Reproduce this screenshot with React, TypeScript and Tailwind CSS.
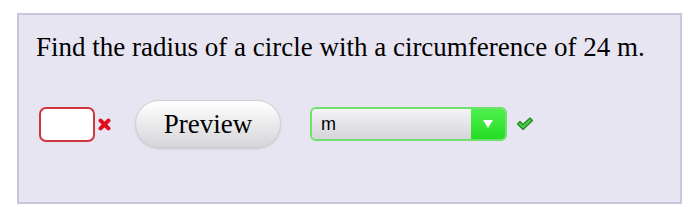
export default function App() {
  return (
    <div className="w-[700px] h-[207px] bg-white pt-[13px] pl-[17px]">
      <div
        className="w-[665px] h-[191px] border-2 border-[#c9c5dd] bg-[#e8e5f2] pl-[17px] pt-[14px]"
        style={{ fontFamily: '"Liberation Serif", serif' }}
      >
        <p className="text-[27px] leading-[36px] text-black">
          Find the radius of a circle with a circumference of 24 m.
        </p>

        <div className="mt-[35px] flex items-center">
          {/* answer box */}
          <div className="ml-[3px] h-[35px] w-[56px] rounded-[7px] border-2 border-[#d0343c] bg-white" />
          <svg className="ml-[3px] h-[13px] w-[13px]" viewBox="0 0 10 10" aria-hidden>
            <path d="M2 2 L8 8 M8 2 L2 8" stroke="#e00d1c" strokeWidth={3.2} strokeLinecap="round" />
          </svg>

          {/* preview */}
          <button className="ml-[24px] h-[48px] w-[146px] rounded-full border border-[#cfcfd4] bg-gradient-to-b from-white to-[#d6d6da] text-[27px] text-black shadow-[0_1px_2px_rgba(0,0,0,0.15)]">
            Preview
          </button>

          {/* unit select */}
          <div className="ml-[29px] flex h-[34px] w-[197px] overflow-hidden rounded-[6px] border-2 border-[#6ee06e]">
            <div
              className="flex flex-1 items-center bg-gradient-to-b from-[#f4f4f6] to-[#d5d4d9] pl-[9px] text-[18px] text-black"
              style={{ fontFamily: '"Liberation Sans", Arial, sans-serif' }}
            >
              m
            </div>
            <div className="flex w-[34px] items-center justify-center bg-gradient-to-b from-[#4df04d] to-[#22dd22]">
              <svg className="h-[10px] w-[12px]" viewBox="0 0 12 10" aria-hidden>
                <path d="M1 1 L11 1 L6 9 Z" fill="white" />
              </svg>
            </div>
          </div>
          <svg className="ml-[9px] h-[14px] w-[18px]" viewBox="0 0 18 14" aria-hidden>
            <path
              d="M1.5 7 L4 4.5 L7 7.5 L14 1 L16.5 3.5 L7 12.5 Z"
              fill="#4cc84c"
              stroke="#1f8a1f"
              strokeWidth={1.2}
              strokeLinejoin="round"
            />
          </svg>
        </div>
      </div>
    </div>
  )
}
